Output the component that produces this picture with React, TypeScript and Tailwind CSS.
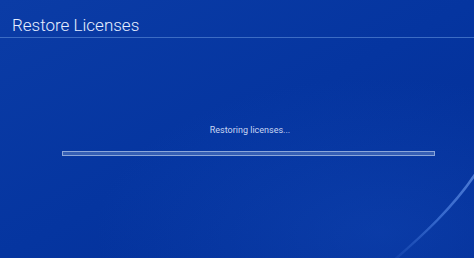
export default function App() {
  return (
    <div className="relative w-[474px] h-[258px] overflow-hidden bg-gradient-to-br from-[#0b3ca6] via-[#0535a0] to-[#032e96] text-white" style={{ fontFamily: 'Roboto, "Noto Sans", sans-serif' }}>
      <svg className="absolute inset-0 pointer-events-none" width="474" height="258" viewBox="0 0 474 258">
        <defs>
          <linearGradient id="arc" x1="0" y1="1" x2="1" y2="0">
            <stop offset="0" stopColor="#6aa0ff" stopOpacity="0.05" />
            <stop offset="0.5" stopColor="#6aa0ff" stopOpacity="0.45" />
            <stop offset="1" stopColor="#8ab6ff" stopOpacity="0.55" />
          </linearGradient>
          <radialGradient id="glow" cx="0.8" cy="0.9" r="0.6">
            <stop offset="0" stopColor="#1a56c8" stopOpacity="0.3" />
            <stop offset="1" stopColor="#1a56c8" stopOpacity="0" />
          </radialGradient>
        </defs>
        <rect x="0" y="0" width="474" height="258" fill="url(#glow)" />
        <path d="M392 262 C 422 236, 455 206, 478 170" stroke="url(#arc)" strokeWidth="2.5" fill="none" />
      </svg>
      <div className="relative flex flex-col h-full">
        <div className="h-[38px] border-b border-[#3c6cc4] flex items-end pl-[12px] pb-[3px]">
          <span className="text-[17px] leading-none font-light text-[#e6eeff]">Restore Licenses</span>
        </div>
        <div className="flex flex-col pt-[88px]">
          <span className="self-center ml-[26px] text-[9px] leading-none text-[#c8d6f2]">Restoring licenses...</span>
          <div className="mt-[16px] ml-[62px] w-[373px] h-[5px] border border-[#8aa6da] bg-[#4a70bc]/70" />
        </div>
      </div>
    </div>
  );
}
